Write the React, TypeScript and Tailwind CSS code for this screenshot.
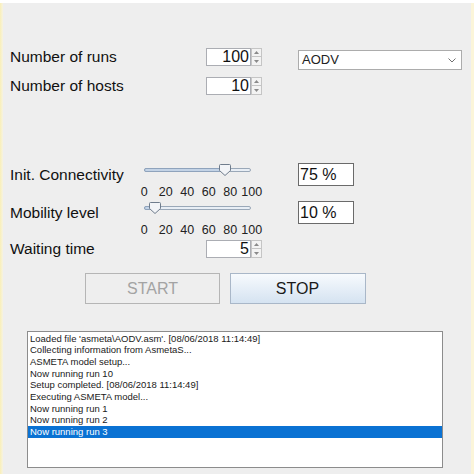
import React from 'react';

const FONT = { fontFamily: '"Liberation Sans", Arial, sans-serif' };

const logLines = [
  "Loaded file 'asmeta\\AODV.asm'. [08/06/2018 11:14:49]",
  'Collecting information from AsmetaS...',
  'ASMETA model setup...',
  'Now running run 10',
  'Setup completed. [08/06/2018 11:14:49]',
  'Executing ASMETA model...',
  'Now running run 1',
  'Now running run 2',
  'Now running run 3',
];

function Spinner({ value }: { value: string }) {
  return (
    <div className="flex h-[18px] w-[56px]">
      <div className="flex h-full w-[45px] items-center justify-end border border-[#abadb3] bg-white pr-[1px] text-[16px] leading-none text-[#111]">
        {value}
      </div>
      <div className="flex h-full w-[11px] flex-col">
        <div className="flex h-1/2 items-center justify-center border border-[#c5c5c5] bg-[#f3f3f3]">
          <svg width="5" height="3" viewBox="0 0 5 3">
            <path d="M0 3 L2.5 0 L5 3 Z" fill="#8a8a8a" />
          </svg>
        </div>
        <div className="flex h-1/2 items-center justify-center border border-t-0 border-[#c5c5c5] bg-[#f3f3f3]">
          <svg width="5" height="3" viewBox="0 0 5 3">
            <path d="M0 0 L2.5 3 L5 0 Z" fill="#8a8a8a" />
          </svg>
        </div>
      </div>
    </div>
  );
}

function Slider({ value }: { value: number }) {
  // label centres sit 21.5px apart, first one at 10.75px
  const thumb = 10.75 + value * 1.075;
  return (
    <div className="flex w-[129px] flex-col">
      <div className="relative h-[14px]">
        <div className="absolute left-[10.5px] top-[4.5px] h-[4px] w-[107px] rounded-[2px] border border-[#9aa8b8] bg-[#e8eef5]" />
        <div
          className="absolute left-[10.5px] top-[4.5px] h-[4px] rounded-l-[2px] border border-[#8fa3bc] bg-[#c3d3e6]"
          style={{ width: thumb - 10.5 }}
        />
        <svg
          className="absolute top-[1px]"
          style={{ left: thumb - 6 }}
          width="12"
          height="12"
          viewBox="0 0 12 12"
        >
          <path
            d="M1.5 0.5 H10.5 Q11.5 0.5 11.5 1.5 V6.5 L6 11.5 L0.5 6.5 V1.5 Q0.5 0.5 1.5 0.5 Z"
            fill="#f2f4f7"
            stroke="#6f7c8c"
            strokeWidth="1"
          />
        </svg>
      </div>
      <div className="mt-[8px] grid h-[14px] grid-cols-6 text-center text-[12.5px] leading-[14px] text-[#222]">
        <span>0</span>
        <span>20</span>
        <span>40</span>
        <span>60</span>
        <span>80</span>
        <span>100</span>
      </div>
    </div>
  );
}

function PercentBox({ value }: { value: string }) {
  return (
    <div className="flex h-[23px] w-[56px] items-center border border-[#6a6a6a] bg-white pl-[1px] text-[16px] leading-none text-[#111]">
      {value}
    </div>
  );
}

export default function App() {
  return (
    <div className="flex h-[474px] w-[474px] flex-col overflow-hidden bg-[#eeeeee]" style={FONT}>
      <div className="h-[3px] bg-white" />
      <div className="flex flex-1">
        <div className="w-[3px] bg-gradient-to-r from-[#f9efb8] to-[#f6f3e2]" />

        <div className="flex flex-1 flex-col text-[#111]">
          {/* Runs / protocol */}
          <div className="mt-[45px] flex h-[22px] items-start">
            <div className="flex h-[18px] w-[203px] items-center pl-[7px] text-[15.5px]">Number of runs</div>
            <Spinner value="100" />
            <div className="ml-[36px] mt-[2px] flex h-[20px] w-[164px] items-center justify-between border border-[#acacac] bg-white pl-[3px] pr-[5px] text-[13px] text-[#222]">
              <span>AODV</span>
              <svg width="8" height="5" viewBox="0 0 8 5">
                <path d="M0.5 0.5 L4 4 L7.5 0.5" fill="none" stroke="#707070" strokeWidth="1" />
              </svg>
            </div>
          </div>

          {/* Hosts */}
          <div className="mt-[7px] flex h-[18px] items-center">
            <div className="flex h-[18px] w-[203px] items-center pl-[7px] text-[15.5px]">Number of hosts</div>
            <Spinner value="10" />
          </div>

          {/* Connectivity */}
          <div className="mt-[68px] flex items-start">
            <div className="flex h-[23px] w-[130.5px] items-center pl-[7px] text-[15.5px]">Init. Connectivity</div>
            <Slider value={75} />
            <div className="ml-[35.5px]">
              <PercentBox value="75 %" />
            </div>
          </div>

          {/* Mobility */}
          <div className="mt-[2px] flex items-start">
            <div className="flex h-[23px] w-[130.5px] items-center pl-[7px] text-[15.5px]">Mobility level</div>
            <Slider value={10} />
            <div className="ml-[35.5px]">
              <PercentBox value="10 %" />
            </div>
          </div>

          {/* Waiting */}
          <div className="mt-[3px] flex h-[18px] items-center">
            <div className="flex h-[18px] w-[203px] items-center pl-[7px] text-[15.5px]">Waiting time</div>
            <Spinner value="5" />
          </div>

          {/* Buttons */}
          <div className="mt-[15px] flex h-[31px]">
            <button className="ml-[82px] h-full w-[135px] border border-[#b5b5b5] bg-[#eeeeee] text-[16px] text-[#a3a3a3]">
              START
            </button>
            <button className="ml-[9.5px] h-full w-[136px] border border-[#a9b7c8] bg-gradient-to-b from-[#f7fafd] to-[#d5e3f1] text-[16px] text-[#1a1a1a]">
              STOP
            </button>
          </div>

          {/* Log */}
          <div className="ml-[24px] mt-[27px] h-[137px] w-[416px] border border-[#8c8c8c] bg-white pt-[0.5px]">
            {logLines.map((line, i) => (
              <div
                key={i}
                className={
                  i === logLines.length - 1
                    ? 'h-[11.7px] whitespace-nowrap bg-[#0a72d3] pl-[2px] text-[9.5px] leading-[11.7px] text-white'
                    : 'h-[11.7px] whitespace-nowrap pl-[2px] text-[9.5px] leading-[11.7px] text-[#1a1a1a]'
                }
              >
                {line}
              </div>
            ))}
          </div>
        </div>

        <div className="w-[3px] bg-[#fbf5d9]" />
      </div>
    </div>
  );
}
